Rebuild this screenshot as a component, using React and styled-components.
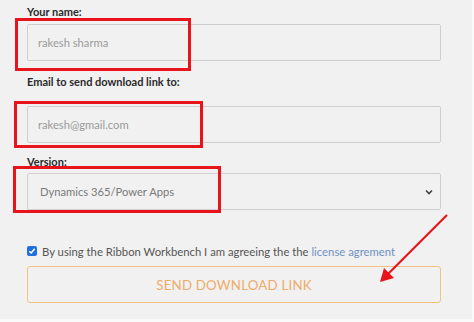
import React from "react";
import styled, { createGlobalStyle } from "styled-components";

const GlobalStyle = createGlobalStyle`
  html, body {
    margin: 0;
    padding: 0;
    background: #fafafa;
  }
  * { box-sizing: border-box; }
`;

const Panel = styled.form`
  position: relative;
  width: 472px;
  height: 319px;
  background: #f1f1f1;
  padding: 4px 31px 0 27px;
  font-family: Lato, "Open Sans", sans-serif;
  display: flex;
  flex-direction: column;
`;

const Label = styled.label`
  display: block;
  font-size: 11px;
  font-weight: 700;
  color: #2a2a2a;
  line-height: 15px;
  height: 15px;
  margin-top: ${(p) => p.$top || 0}px;
`;

const Field = styled.div`
  position: relative;
  margin-top: ${(p) => p.$top || 5}px;
  height: 37px;
`;

const Input = styled.input`
  width: 100%;
  height: 37px;
  border: 1px solid #cfcfcf;
  border-radius: 2px;
  background: #f1f1f1;
  padding: 0 10px;
  font-family: Lato, "Open Sans", sans-serif;
  font-size: 11.2px;
  color: #9a9a9a;
  outline: none;
`;

const Select = styled.div`
  height: 37px;
  border: 1px solid #cfcfcf;
  border-radius: 2px;
  background: #f1f1f1;
  padding: 0 6px 0 12px;
  font-size: 11.2px;
  color: #7a7a7a;
  display: flex;
  align-items: center;
  justify-content: space-between;
`;

const Highlight = styled.div`
  position: absolute;
  border: 3px solid #e8141b;
  left: ${(p) => p.$x}px;
  top: ${(p) => p.$y}px;
  width: ${(p) => p.$w}px;
  height: ${(p) => p.$h}px;
  pointer-events: none;
`;

const AgreeRow = styled.div`
  margin-top: 33px;
  display: flex;
  align-items: center;
  gap: 5px;
  font-size: 11.3px;
  color: #555;
  height: 16px;
`;

const Check = styled.span`
  width: 10px;
  height: 10px;
  border-radius: 2px;
  background: #1f6fe0;
  display: inline-flex;
  align-items: center;
  justify-content: center;
`;

const Link = styled.span`
  color: #6e90c4;
`;

const Button = styled.div`
  margin-top: 7px;
  height: 37px;
  border: 1px solid #f0c27e;
  border-radius: 3px;
  display: flex;
  align-items: center;
  justify-content: center;
  font-size: 13.3px;
  color: #eeac6a;
  letter-spacing: 0.2px;
`;

const Arrow = styled.svg`
  position: absolute;
  left: 0;
  top: 0;
  pointer-events: none;
`;

export default function App() {
  return (
    <>
      <GlobalStyle />
      <Panel>
        <Label>Your name:</Label>
        <Field>
          <Input defaultValue="rakesh sharma" />
        </Field>
        <Label $top={13}>Email to send download link to:</Label>
        <Field $top={17}>
          <Input defaultValue="rakesh@gmail.com" />
        </Field>
        <Label $top={11}>Version:</Label>
        <Field $top={4}>
          <Select>
            <span>Dynamics 365/Power Apps</span>
            <svg width="10" height="8" viewBox="0 0 10 8">
              <path d="M2 2.5 L5 5.5 L8 2.5" fill="none" stroke="#444" strokeWidth="1.6" />
            </svg>
          </Select>
        </Field>
        <AgreeRow>
          <Check>
            <svg width="8" height="8" viewBox="0 0 8 8">
              <path d="M1.3 4.2 L3.2 6 L6.7 1.8" fill="none" stroke="#fff" strokeWidth="1.5" />
            </svg>
          </Check>
          <span>
            By using the Ribbon Workbench I am agreeing the the <Link>license agrement</Link>
          </span>
        </AgreeRow>
        <Button>SEND DOWNLOAD LINK</Button>

        <Highlight $x={15} $y={18} $w={176} $h={53} />
        <Highlight $x={14} $y={101} $w={189} $h={47} />
        <Highlight $x={13} $y={166} $w={208} $h={47} />
        <Arrow width="472" height="319">
          <line x1="447" y1="215" x2="388" y2="274" stroke="#e8141b" strokeWidth="2.2" />
          <path d="M380 282 L384 268 L394 278 Z" fill="#e8141b" />
        </Arrow>
      </Panel>
    </>
  );
}
